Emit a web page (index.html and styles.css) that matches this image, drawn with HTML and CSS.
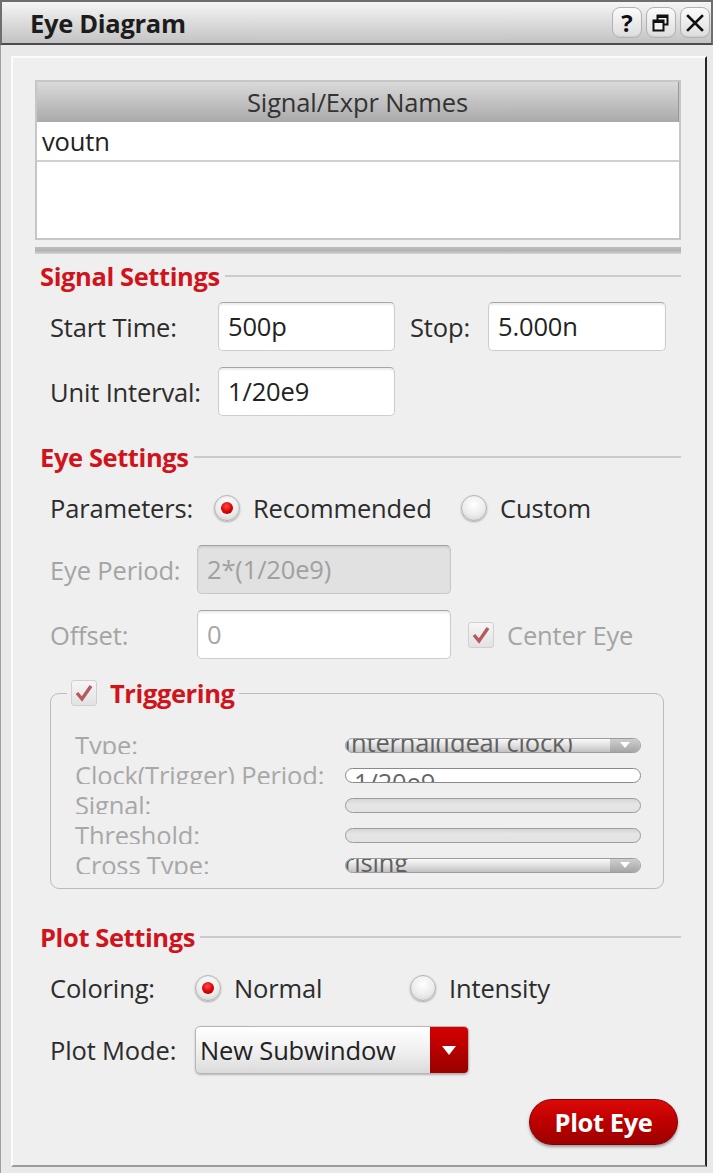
FILE: index.html
```html
<!DOCTYPE html>
<html>
<head>
<meta charset="utf-8">
<title>Eye Diagram</title>
<link rel="stylesheet" href="styles.css">
</head>
<body>
<div class="window">
  <div class="titlebar">
    <span class="title">Eye Diagram</span>
    <div class="tb-buttons">
      <span class="tb-btn tb-help">?</span>
      <span class="tb-btn">
        <svg width="20" height="20" viewBox="0 0 20 20"><rect x="6.5" y="2.5" width="10" height="9" fill="none" stroke="#111" stroke-width="2"/><rect x="6.5" y="2" width="10" height="3" fill="#111"/><rect x="2.5" y="7.5" width="10" height="10" fill="#f2f2f2" stroke="#111" stroke-width="2"/><rect x="2.5" y="7" width="10" height="3" fill="#111"/></svg>
      </span>
      <span class="tb-btn">
        <svg width="20" height="20" viewBox="0 0 20 20"><path d="M3 3 L17 17 M17 3 L3 17" stroke="#111" stroke-width="2.6" stroke-linecap="square"/></svg>
      </span>
    </div>
  </div>
  <div class="frame">
    <div class="panel">
      <div class="table">
        <div class="thead">Signal/Expr Names</div>
        <div class="trow">voutn</div>
      </div>
      <div class="splitter"></div>

      <div class="section-title sec-signal"><span class="sec-text">Signal Settings</span><span class="sec-line"></span></div>
      <div class="row row-first">
        <span class="label w167">Start Time:</span>
        <span class="input w177">500p</span>
        <span class="label stop-label">Stop:</span>
        <span class="input w178">5.000n</span>
      </div>
      <div class="row row-gap16">
        <span class="label w167">Unit Interval:</span>
        <span class="input w177">1/20e9</span>
      </div>

      <div class="section-title sec-eye"><span class="sec-text">Eye Settings</span><span class="sec-line"></span></div>
      <div class="row opt-row row-gap16">
        <span class="label w163">Parameters:</span>
        <span class="option w247"><span class="radio on"><span class="dot"></span></span><span class="opt-text">Recommended</span></span>
        <span class="option"><span class="radio"></span><span class="opt-text">Custom</span></span>
      </div>
      <div class="row row-gap17">
        <span class="label disabled w146">Eye Period:</span>
        <span class="input input-disabled w254">2*(1/20e9)</span>
      </div>
      <div class="row row-gap16">
        <span class="label disabled w146">Offset:</span>
        <span class="input input-gray w254">0</span>
        <span class="check-wrap">
          <span class="checkbox">
            <svg width="22" height="22" viewBox="0 0 22 22"><path d="M4 11 L9 17 L18 4" fill="none" stroke="#b65a60" stroke-width="3.4"/></svg>
          </span>
          <span class="check-text disabled">Center Eye</span>
        </span>
      </div>

      <fieldset class="group">
        <legend class="group-legend">
          <span class="checkbox">
            <svg width="22" height="22" viewBox="0 0 22 22"><path d="M4 11 L9 17 L18 4" fill="none" stroke="#b65a60" stroke-width="3.4"/></svg>
          </span>
          <span class="legend-text">Triggering</span>
        </legend>
        <div class="trig-row">
          <span class="trig-label"><span class="clip-text">Type:</span></span>
          <span class="mini-combo"><span class="mini-text">Internal(Ideal clock)</span><span class="mini-arrow"><svg width="10" height="6" viewBox="0 0 10 6"><path d="M0 0 L10 0 L5 6 Z" fill="#fff"/></svg></span></span>
        </div>
        <div class="trig-row">
          <span class="trig-label"><span class="clip-text">Clock(Trigger) Period:</span></span>
          <span class="mini-field white"><span class="mini-top">1/20e9</span></span>
        </div>
        <div class="trig-row">
          <span class="trig-label"><span class="clip-text">Signal:</span></span>
          <span class="mini-field"></span>
        </div>
        <div class="trig-row">
          <span class="trig-label"><span class="clip-text">Threshold:</span></span>
          <span class="mini-field"></span>
        </div>
        <div class="trig-row">
          <span class="trig-label"><span class="clip-text">Cross Type:</span></span>
          <span class="mini-combo"><span class="mini-text">rising</span><span class="mini-arrow"><svg width="10" height="6" viewBox="0 0 10 6"><path d="M0 0 L10 0 L5 6 Z" fill="#fff"/></svg></span></span>
        </div>
      </fieldset>

      <div class="section-title sec-plot"><span class="sec-text">Plot Settings</span><span class="sec-line"></span></div>
      <div class="row opt-row row-gap16">
        <span class="label w144">Coloring:</span>
        <span class="option w215"><span class="radio on"><span class="dot"></span></span><span class="opt-text">Normal</span></span>
        <span class="option"><span class="radio"></span><span class="opt-text">Intensity</span></span>
      </div>
      <div class="row row-gap18">
        <span class="label w144">Plot Mode:</span>
        <span class="combo">
          <span class="combo-text">New Subwindow</span>
          <span class="combo-arrow"><svg width="14" height="9" viewBox="0 0 14 9"><path d="M0 0 L14 0 L7 9 Z" fill="#fff"/></svg></span>
        </span>
      </div>
      <div class="btn-row">
        <button class="btn">Plot Eye</button>
      </div>
    </div>
  </div>
</div>
</body>
</html>
```

FILE: styles.css
```css
* { box-sizing: border-box; }
html, body { margin: 0; padding: 0; }
body {
  width: 713px;
  height: 1173px;
  overflow: hidden;
  background: #e6e6e6;
  font-family: "Open Sans", "DejaVu Sans", sans-serif;
  font-size: 25.5px;
  letter-spacing: -0.15px;
  color: #2c2c2c;
}
.window { width: 713px; height: 1173px; display: flex; flex-direction: column; }

/* title bar */
.titlebar {
  flex: none;
  height: 45px;
  display: flex;
  align-items: center;
  justify-content: space-between;
  padding: 0 1px 0 28px;
  background: linear-gradient(#f6f6f6, #dedede 45%, #c3c3c3);
  border: 2px solid #6e6e6e;
  border-bottom-color: #4c4c4c;
}
.title { font-weight: 700; font-size: 25.5px; color: #1c1c1c; letter-spacing: -0.3px; }
.tb-buttons { display: flex; gap: 4px; }
.tb-btn {
  width: 30px;
  height: 31px;
  display: flex;
  align-items: center;
  justify-content: center;
  border: 1px solid #b2b2b2;
  border-radius: 8px;
  background: linear-gradient(#fbfbfb, #dddddd);
  box-shadow: inset 0 -1px 1px rgba(0,0,0,0.08);
}
.tb-help { font-weight: 700; font-size: 24px; color: #111; line-height: 1; }

/* frame & panel */
.frame {
  flex: 1;
  padding: 11px 6px 6px 10px;
  background: #e9e9e9;
  border-left: 1px solid #a0a0a0;
}
.panel {
  height: 100%;
  background: #efefef;
  border-top: 2px solid #fbfbfb;
  border-left: 2px solid #fbfbfb;
  border-right: 2px solid #262626;
  border-bottom: 2px solid #9c9c9c;
  padding: 22px 24px 0 22px;
}

/* table */
.table { height: 160px; border: 2px solid #c6c6c6; background: #fff; }
.thead {
  height: 40px;
  line-height: 40px;
  text-align: center;
  color: #333;
  background: linear-gradient(#d9d9d9, #aaaaaa);
  border-right: 1px solid #999;
}
.trow {
  height: 40px;
  line-height: 38px;
  padding-left: 5px;
  border-bottom: 2px solid #d0d0d0;
  color: #222;
}
.splitter {
  margin-top: 7px;
  height: 7px;
  background: linear-gradient(#bdbdbd, #b3b3b3 50%, #d4d4d4);
}

/* section titles */
.section-title {
  height: 30px;
  display: flex;
  align-items: center;
  padding-left: 5px;
}
.sec-signal { margin-top: 7px; }
.sec-eye { margin-top: 26px; }
.sec-plot { margin-top: 33px; }
.sec-text { font-weight: 700; color: #d0141c; line-height: 30px; letter-spacing: -0.4px; }
.sec-line { flex: 1; height: 2px; background: #cbcbcb; margin-left: 5px; }

/* rows */
.row { display: flex; align-items: center; padding-left: 15px; }
.row-first { margin-top: 11px; }
.row-gap16 { margin-top: 16px; }
.row-gap17 { margin-top: 17px; }
.row-gap18 { margin-top: 18px; }
.opt-row { height: 40px; }
.label { flex: none; white-space: nowrap; }
.disabled { color: #a4a4a4; }
.w144 { width: 145px; }
.w146 { width: 147px; }
.w163 { width: 164px; }
.w167 { width: 168px; }
.w177 { width: 177px; }
.w178 { width: 178px; }
.w215 { width: 215px; }
.w247 { width: 247px; }
.w254 { width: 254px; }
.stop-label { width: 78px; margin-left: 15px; }

.input {
  flex: none;
  height: 49px;
  line-height: 47px;
  padding-left: 9px;
  background: #fff;
  border: 1px solid #cdcdcd;
  border-top-color: #a6a6a6;
  border-radius: 5px;
  box-shadow: inset 0 2px 2px rgba(0,0,0,0.07);
  color: #222;
  white-space: nowrap;
}
.input-disabled { background: #e1e1e1; color: #a0a0a0; border-color: #c8c8c8; border-top-color: #a0a0a0; }
.input-gray { color: #a6a6a6; }

/* radio */
.option { display: flex; align-items: center; flex: none; }
.radio {
  flex: none;
  width: 26px;
  height: 26px;
  border-radius: 50%;
  border: 1px solid #b4b4b4;
  background: radial-gradient(circle at 50% 35%, #ffffff, #ececec 55%, #cdcdcd);
  box-shadow: 0 1px 2px rgba(0,0,0,0.3);
  display: flex;
  align-items: center;
  justify-content: center;
}
.dot {
  width: 12px;
  height: 12px;
  border-radius: 50%;
  background: radial-gradient(circle at 45% 35%, #ff4a4a, #d80000 55%, #960000);
}
.opt-text { margin-left: 13px; white-space: nowrap; }

/* checkbox */
.check-wrap { display: flex; align-items: center; margin-left: 17px; }
.checkbox {
  flex: none;
  width: 26px;
  height: 26px;
  border: 1px solid #d0d0d0;
  border-radius: 3px;
  background: linear-gradient(#f6f6f6, #e2e2e2);
  display: flex;
  align-items: center;
  justify-content: center;
}
.check-text { margin-left: 13px; white-space: nowrap; }

/* triggering group */
.group {
  margin: 19px 0 0 15px;
  width: 614px;
  padding: 0 0 8px 0;
  border: 1px solid #bcbcbc;
  border-radius: 9px;
  min-inline-size: 0;
}
.group-legend {
  margin-left: 16px;
  padding: 0 4px;
  height: 30px;
  display: flex;
  align-items: center;
}
.legend-text {
  margin-left: 13px;
  font-weight: 700;
  color: #d0141c;
  line-height: 30px;
  letter-spacing: -0.4px;
}
.trig-row {
  height: 30px;
  display: flex;
  align-items: center;
  padding-left: 24px;
}
.trig-row:first-of-type { margin-top: 22px; }
.trig-label {
  flex: none;
  width: 270px;
  height: 18px;
  overflow: hidden;
  color: #a8a8a8;
}
.clip-text { display: block; line-height: 18px; white-space: nowrap; }

.mini-combo, .mini-field {
  flex: none;
  width: 296px;
  height: 15px;
  border: 1px solid #9c9c9c;
  border-radius: 8px;
  overflow: hidden;
}
.mini-combo {
  display: flex;
  background: linear-gradient(#fafafa, #e0e0e0 50%, #c2c2c2);
}
.mini-text {
  flex: 1;
  display: block;
  line-height: 14px;
  margin-top: -4px;
  margin-left: -2px;
  color: #606060;
  white-space: nowrap;
  overflow: hidden;
}
.mini-arrow {
  flex: none;
  width: 30px;
  display: flex;
  align-items: center;
  justify-content: center;
  background: linear-gradient(#cfcfcf, #a6a6a6);
}
.mini-field { background: linear-gradient(#d4d4d4, #e6e6e6 40%, #e2e2e2); }
.mini-field.white { background: #fff; border-color: #8a8a8a; }
.mini-top {
  display: block;
  line-height: 14px;
  margin-top: 6px;
  padding-left: 8px;
  color: #666;
  white-space: nowrap;
}

/* combo */
.combo {
  flex: none;
  width: 274px;
  height: 48px;
  display: flex;
  border: 1px solid #b6b6b6;
  border-radius: 5px;
  overflow: hidden;
  background: linear-gradient(#ffffff, #efefef 55%, #dadada);
  box-shadow: 0 1px 2px rgba(0,0,0,0.25);
}
.combo-text { flex: 1; padding-left: 4px; line-height: 46px; color: #222; white-space: nowrap; }
.combo-arrow {
  flex: none;
  width: 38px;
  display: flex;
  align-items: center;
  justify-content: center;
  background: linear-gradient(#d60000, #b00000 60%, #9a0000);
}

/* button */
.btn-row { display: flex; justify-content: flex-end; margin-top: 25px; padding-right: 3px; }
.btn {
  width: 149px;
  height: 46px;
  border-radius: 23px;
  border: 1px solid #7e0000;
  background: linear-gradient(#dc0a0a, #c00000 45%, #9c0000);
  color: #fff;
  font-family: "Open Sans", "DejaVu Sans", sans-serif;
  font-weight: 700;
  font-size: 25.5px;
  letter-spacing: -0.4px;
  box-shadow: 0 2px 3px rgba(0,0,0,0.35);
  padding: 0;
}
```
